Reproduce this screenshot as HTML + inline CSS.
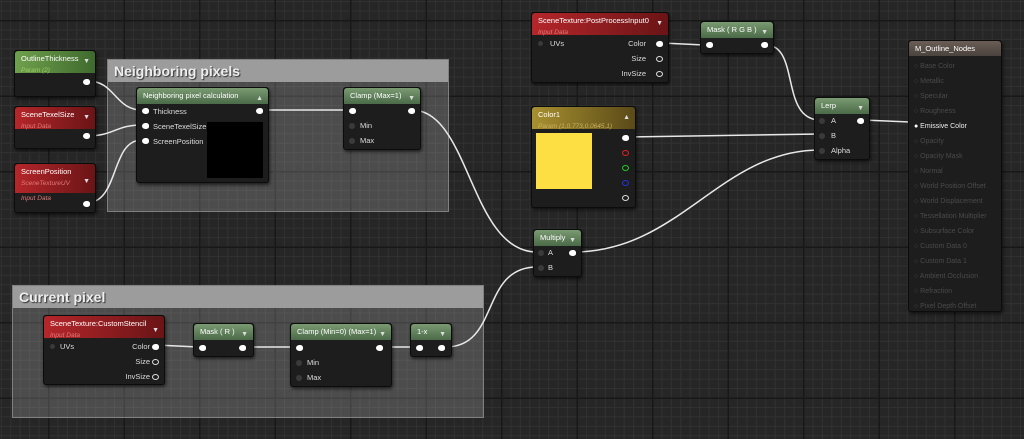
<!DOCTYPE html><html><head><style>
body{margin:0;width:1024px;height:439px;overflow:hidden;background:#262626;font-family:"Liberation Sans",sans-serif;position:relative}
.grid{position:absolute;inset:0;background-image:
linear-gradient(90deg,#181818 1.5px,transparent 1.5px),linear-gradient(#181818 1.5px,transparent 1.5px),
linear-gradient(90deg,#313131 1px,transparent 1px),linear-gradient(#313131 1px,transparent 1px);
background-size:75.5px 75.5px,75.5px 75.5px,9.4375px 9.4375px,9.4375px 9.4375px;
background-position:48px 20px,48px 20px,48px 20px,48px 20px}
.cm{position:absolute;background:rgba(165,165,165,0.3);border:1px solid #808080}
.cm .h{background:#9c9c9c;height:22px;color:#eee;font-weight:bold;font-size:14px;line-height:22px;padding-left:6px;text-shadow:1px 1px 1px #333}
.n{position:absolute;background:#1c1d1c;border:1px solid #0c0c0c;border-radius:3px;box-shadow:1px 2px 3px rgba(0,0,0,.6);font-size:7.5px;color:#ddd}
.n .t{height:16px;line-height:15px;padding-left:6px;border-radius:3px 3px 0 0;font-size:7.5px;color:#fff;position:relative}
.g{background:linear-gradient(#7a9a72,#4b6a48)}
.gb{background:linear-gradient(90deg,#6fa04c,#3f6a2e)}
.r{background:linear-gradient(90deg,#b5262a,#6a1416)}
.y{background:linear-gradient(90deg,#a89030,#5a4a18)}
.br{background:linear-gradient(#6a5e56,#4a423d)}
.sub{font-size:6.5px;color:#e07a7a;font-style:italic;position:absolute;left:6px;top:12px}
.ar{position:absolute;right:5px;top:3px;font-size:7px;color:#ddd}
.p{position:absolute;width:7px;height:6px;background:#fff;border-radius:50% 40% 40% 50%}
.po{position:absolute;width:5px;height:4px;border:1.5px solid #ddd;border-radius:50%}
.pd{position:absolute;width:6px;height:6px;background:#3a3a3a;border-radius:50%}
.l{position:absolute;font-size:7.5px;color:#ddd}
</style></head><body><div class="grid"></div>
<div class="cm" style="left:107px;top:59px;width:340px;height:151px"><div class="h">Neighboring pixels</div></div>
<div class="cm" style="left:12px;top:285px;width:470px;height:131px"><div class="h">Current pixel</div></div>
<svg style="position:absolute;left:0;top:0" width="1024" height="439" fill="none" stroke="#e8e8e8" stroke-width="1.5">
<path d="M88 81 C115 81,115 110,142 110"/>
<path d="M86 136 C115 136,115 125,142 125"/>
<path d="M86 203 C120 203,110 140,142 140"/>
<path d="M263 110 L350 110"/>
<path d="M412 110 C470 110,470 252,537 252"/>
<path d="M662 43 L704 45"/>
<path d="M766 45 C800 45,780 120,820 120"/>
<path d="M626 137 L820 134"/>
<path d="M573 252 C680 252,720 150,820 150"/>
<path d="M862 120 L910 122"/>
<path d="M156 345 L198 347"/>
<path d="M244 347 L294 347"/>
<path d="M384 347 L414 347"/>
<path d="M446 347 C500 347,480 267,537 267"/>
</svg>
<div class="n" style="left:14px;top:50px;width:80px;height:45px"><div class="t gb" style="height:22px">OutlineThickness<div class="sub" style="color:#9c6">Param (2)</div><span class="ar">▼</span></div><div class="p" style="left:68px;top:28px"></div></div>
<div class="n" style="left:14px;top:106px;width:80px;height:41px"><div class="t r" style="height:22px">SceneTexelSize<div class="sub">Input Data</div><span class="ar">▼</span></div><div class="p" style="left:68px;top:26px"></div></div>
<div class="n" style="left:14px;top:163px;width:80px;height:48px"><div class="t r" style="height:29px">ScreenPosition<div class="sub">SceneTextureUV<br>Input Data</div><span class="ar" style="top:10px">▼</span></div><div class="p" style="left:68px;top:37px"></div></div>
<div class="n" style="left:136px;top:87px;width:131px;height:94px"><div class="t g">Neighboring pixel calculation<span class="ar">▲</span></div>
<div class="p" style="left:5px;top:20px"></div><span class="l" style="left:16px;top:19px">Thickness</span><div class="p" style="left:119px;top:20px"></div>
<div class="p" style="left:5px;top:35px"></div><span class="l" style="left:16px;top:34px">SceneTexelSize</span>
<div class="p" style="left:5px;top:50px"></div><span class="l" style="left:16px;top:49px">ScreenPosition</span>
<div style="position:absolute;left:70px;top:34px;width:56px;height:56px;background:#000"></div></div>
<div class="n" style="left:343px;top:87px;width:76px;height:61px"><div class="t g">Clamp (Max=1)<span class="ar">▼</span></div>
<div class="p" style="left:5px;top:20px"></div><div class="p" style="left:64px;top:20px"></div>
<div class="pd" style="left:5px;top:35px"></div><span class="l" style="left:16px;top:33px">Min</span>
<div class="pd" style="left:5px;top:50px"></div><span class="l" style="left:16px;top:48px">Max</span></div>
<div class="n" style="left:531px;top:12px;width:136px;height:69px"><div class="t r" style="height:22px">SceneTexture:PostProcessInput0<div class="sub">Input Data</div><span class="ar">▼</span></div>
<div class="pd" style="left:6px;top:28px;width:5px;height:5px"></div><span class="l" style="left:18px;top:26px">UVs</span>
<span class="l" style="right:22px;top:26px">Color</span><div class="p" style="left:124px;top:28px"></div>
<span class="l" style="right:22px;top:41px">Size</span><div class="po" style="left:124px;top:43px"></div>
<span class="l" style="right:22px;top:56px">InvSize</span><div class="po" style="left:124px;top:58px"></div></div>
<div class="n" style="left:700px;top:21px;width:72px;height:31px"><div class="t g">Mask ( R G B )<span class="ar">▼</span></div><div class="p" style="left:5px;top:20px"></div><div class="p" style="left:60px;top:20px"></div></div>
<div class="n" style="left:531px;top:106px;width:103px;height:100px"><div class="t y" style="height:22px">Color1<div class="sub" style="color:#c9b060">Param (1,0.773,0.0645,1)</div><span class="ar">▲</span></div>
<div style="position:absolute;left:4px;top:26px;width:56px;height:56px;background:#fddf44"></div>
<div class="p" style="left:90px;top:28px"></div><div class="po" style="left:90px;top:43px;border-color:#d22"></div><div class="po" style="left:90px;top:58px;border-color:#2c2"></div><div class="po" style="left:90px;top:73px;border-color:#23d"></div><div class="po" style="left:90px;top:88px"></div></div>
<div class="n" style="left:814px;top:97px;width:54px;height:61px"><div class="t g">Lerp<span class="ar">▼</span></div>
<div class="pd" style="left:4px;top:20px"></div><span class="l" style="left:16px;top:18px">A</span><div class="p" style="left:42px;top:20px"></div>
<div class="pd" style="left:4px;top:35px"></div><span class="l" style="left:16px;top:33px">B</span>
<div class="pd" style="left:4px;top:50px"></div><span class="l" style="left:16px;top:48px">Alpha</span></div>
<div class="n" style="left:533px;top:229px;width:47px;height:46px"><div class="t g">Multiply<span class="ar">▼</span></div>
<div class="pd" style="left:4px;top:20px"></div><span class="l" style="left:14px;top:18px">A</span><div class="p" style="left:35px;top:20px"></div>
<div class="pd" style="left:4px;top:35px"></div><span class="l" style="left:14px;top:33px">B</span></div>
<div class="n" style="left:908px;top:40px;width:92px;height:270px"><div class="t br" style="height:15px">M_Outline_Nodes</div>
<div style="position:absolute;left:5px;top:18px;line-height:15px;font-size:7px;color:#4a4a4a">
<div>○ Base Color</div><div>○ Metallic</div><div>○ Specular</div><div>○ Roughness</div><div style="color:#eee"><span style="color:#fff">●</span> Emissive Color</div><div>○ Opacity</div><div>○ Opacity Mask</div><div>○ Normal</div><div>○ World Position Offset</div><div>○ World Displacement</div><div>○ Tessellation Multiplier</div><div>○ Subsurface Color</div><div>○ Custom Data 0</div><div>○ Custom Data 1</div><div>○ Ambient Occlusion</div><div>○ Refraction</div><div>○ Pixel Depth Offset</div></div></div>
<div class="n" style="left:43px;top:315px;width:120px;height:68px"><div class="t r" style="height:22px">SceneTexture:CustomStencil<div class="sub">Input Data</div><span class="ar" style="top:7px">▼</span></div>
<div class="pd" style="left:6px;top:28px;width:5px;height:5px"></div><span class="l" style="left:16px;top:26px">UVs</span>
<span class="l" style="right:14px;top:26px">Color</span><div class="p" style="left:108px;top:28px"></div>
<span class="l" style="right:14px;top:41px">Size</span><div class="po" style="left:108px;top:43px"></div>
<span class="l" style="right:14px;top:56px">InvSize</span><div class="po" style="left:108px;top:58px"></div></div>
<div class="n" style="left:193px;top:323px;width:59px;height:32px"><div class="t g">Mask ( R )<span class="ar">▼</span></div><div class="p" style="left:5px;top:21px"></div><div class="p" style="left:45px;top:21px"></div></div>
<div class="n" style="left:290px;top:323px;width:100px;height:62px"><div class="t g">Clamp (Min=0) (Max=1)<span class="ar">▼</span></div>
<div class="p" style="left:5px;top:21px"></div><div class="p" style="left:85px;top:21px"></div>
<div class="pd" style="left:5px;top:36px"></div><span class="l" style="left:16px;top:34px">Min</span>
<div class="pd" style="left:5px;top:51px"></div><span class="l" style="left:16px;top:49px">Max</span></div>
<div class="n" style="left:410px;top:323px;width:40px;height:32px"><div class="t g">1-x<span class="ar">▼</span></div><div class="p" style="left:5px;top:21px"></div><div class="p" style="left:27px;top:21px"></div></div>
</body></html>
